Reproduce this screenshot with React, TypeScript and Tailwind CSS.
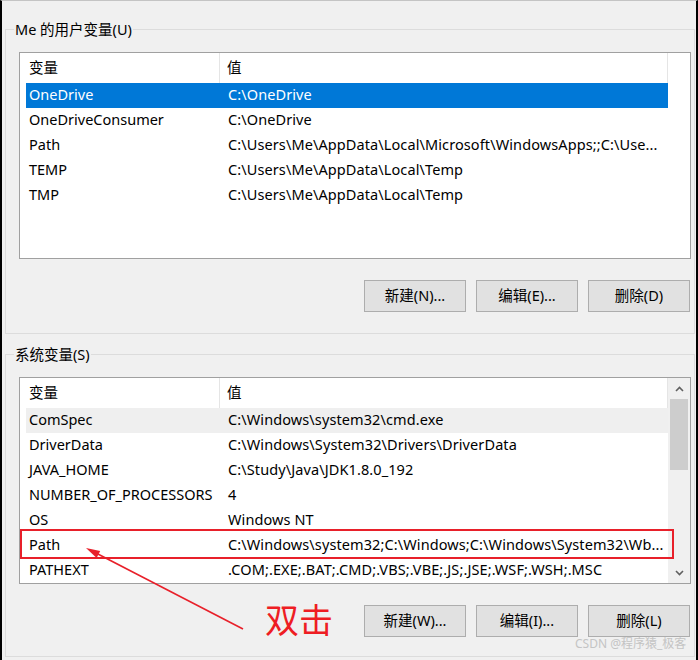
import React from 'react';

type Row = { name: string; value: string };

const userVars: Row[] = [
  { name: 'OneDrive', value: 'C:\\OneDrive' },
  { name: 'OneDriveConsumer', value: 'C:\\OneDrive' },
  { name: 'Path', value: 'C:\\Users\\Me\\AppData\\Local\\Microsoft\\WindowsApps;;C:\\Use...' },
  { name: 'TEMP', value: 'C:\\Users\\Me\\AppData\\Local\\Temp' },
  { name: 'TMP', value: 'C:\\Users\\Me\\AppData\\Local\\Temp' },
];

const sysVars: Row[] = [
  { name: 'ComSpec', value: 'C:\\Windows\\system32\\cmd.exe' },
  { name: 'DriverData', value: 'C:\\Windows\\System32\\Drivers\\DriverData' },
  { name: 'JAVA_HOME', value: 'C:\\Study\\Java\\JDK1.8.0_192' },
  { name: 'NUMBER_OF_PROCESSORS', value: '4' },
  { name: 'OS', value: 'Windows NT' },
  { name: 'Path', value: 'C:\\Windows\\system32;C:\\Windows;C:\\Windows\\System32\\Wb...' },
  { name: 'PATHEXT', value: '.COM;.EXE;.BAT;.CMD;.VBS;.VBE;.JS;.JSE;.WSF;.WSH;.MSC' },
];

const Chevron = ({ up }: { up?: boolean }) => (
  <svg width="9" height="6" viewBox="0 0 9 6">
    <path d={up ? 'M1 5 L4.5 1.5 L8 5' : 'M1 1 L4.5 4.5 L8 1'} fill="none" stroke="#606060" strokeWidth="1.6" />
  </svg>
);

const ListView = ({ rows, selected, active, scroll }: { rows: Row[]; selected?: number; active?: number; scroll?: boolean }) => (
  <div className="flex h-[207px] border border-[#a0a0a0] bg-white">
    <div className="flex w-[648px] flex-col">
      <div className="flex h-[30px] items-center">
        <div className="flex h-full w-[200px] items-center border-r border-[#e5e5e5] pl-[9px]">变量</div>
        <div className="flex h-full flex-1 items-center border-r border-[#e5e5e5] pl-[7px]">值</div>
      </div>
      {rows.map((r, i) => (
        <div
          key={r.name}
          className={
            'ml-[6px] flex h-[25px] w-[642px] items-center whitespace-nowrap pb-[1px] ' +
            (i === selected ? 'bg-[#0078d7] text-white' : i === active ? 'bg-[#efefef]' : '')
          }
        >
          <div className="w-[194px] overflow-hidden pl-[3px]">{r.name}</div>
          <div className="flex-1 overflow-hidden pl-[8px] tracking-[0.1px]">{r.value}</div>
        </div>
      ))}
    </div>
    {scroll ? (
      <div className="flex w-[22px] flex-col bg-[#f0f0f0]">
        <div className="flex h-[21px] items-center justify-center">
          <Chevron up />
        </div>
        <div className="mx-[2px] h-[71px] bg-[#cdcdcd]" />
        <div className="flex-1" />
        <div className="flex h-[21px] items-center justify-center">
          <Chevron />
        </div>
      </div>
    ) : (
      <div className="w-[22px]" />
    )}
  </div>
);

const Buttons = ({ labels }: { labels: string[] }) => (
  <div className="mt-[21px] flex justify-end gap-[10px] pr-[1px]">
    {labels.map((l) => (
      <div key={l} className="flex h-[32px] w-[102px] items-center justify-center border border-[#adadad] bg-[#e1e1e1]">
        {l}
      </div>
    ))}
  </div>
);

const Group = ({ title, children, className }: { title: string; children: React.ReactNode; className: string }) => (
  <fieldset className={'ml-[3px] mr-[1px] border border-[#dcdcdc] ' + className}>
    <legend className="ml-[8px] px-[1px] leading-[20px]">{title}</legend>
    {children}
  </fieldset>
);

export default function App() {
  return (
    <div className="relative flex h-[660px] w-[698px] flex-col overflow-hidden border-x-2 border-t border-x-black border-t-[#c4c4c4] bg-[#f0f0f0] font-['Noto_Sans','Noto_Sans_CJK_SC',sans-serif] text-[14.5px] text-black">
      <Group title="Me 的用户变量(U)" className="mt-[18px]">
        <div className="pb-[21px] pl-[13px] pr-[3px] pt-[13px]">
          <ListView rows={userVars} selected={0} />
          <Buttons labels={['新建(N)...', '编辑(E)...', '删除(D)']} />
        </div>
      </Group>
      <Group title="系统变量(S)" className="mt-[10px]">
        <div className="pb-[19px] pl-[13px] pr-[3px] pt-[13px]">
          <ListView rows={sysVars} active={0} scroll />
          <Buttons labels={['新建(W)...', '编辑(I)...', '删除(L)']} />
        </div>
      </Group>

      {/* annotations */}
      <div className="absolute left-[18px] top-[528px] h-[30px] w-[654px] border-2 border-[#e8202a]" />
      <svg className="absolute left-0 top-0" width="698" height="660" viewBox="0 0 698 660">
        <line x1="241" y1="628" x2="92" y2="551" stroke="#e8202a" strokeWidth="1.6" />
        <polygon points="84,547 94.6,557 98.2,549.9" fill="#e8202a" />
      </svg>
      <div className="absolute left-[263px] top-[602px] text-[34px] leading-none text-[#ee1d23]">双击</div>
      <div className="absolute left-[573px] top-[635px] text-[12px] leading-[16px] text-[#c4c4c4]">CSDN @程序猿_极客</div>
    </div>
  );
}
